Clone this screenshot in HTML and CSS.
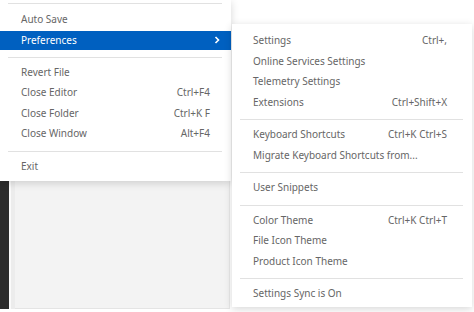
FILE: index.html
```html
<!DOCTYPE html>
<html lang="en">
<head>
    <meta charset="UTF-8">
    <title>File Menu</title>
    <link rel="stylesheet" href="styles.css">
</head>
<body>

<div class="workbench">
    <div class="activity-bar"></div>
    <div class="sidebar-edge"></div>
    <div class="sidebar"></div>
</div>

<!-- File menu -->
<div class="menu menu-file">
    <div class="separator first"></div>
    <div class="item"><span class="label">Auto Save</span></div>
    <div class="item active">
        <span class="label">Preferences</span>
        <svg class="chevron" width="6" height="8" viewBox="0 0 6 8"><path d="M1.5 1 L4.5 4 L1.5 7" fill="none" stroke="#fff" stroke-width="1.6"/></svg>
    </div>
    <div class="separator"></div>
    <div class="item"><span class="label">Revert File</span></div>
    <div class="item"><span class="label">Close Editor</span><span class="keys">Ctrl+F4</span></div>
    <div class="item"><span class="label">Close Folder</span><span class="keys">Ctrl+K F</span></div>
    <div class="item"><span class="label">Close Window</span><span class="keys">Alt+F4</span></div>
    <div class="separator"></div>
    <div class="item"><span class="label">Exit</span></div>
</div>

<!-- Preferences submenu -->
<div class="menu menu-prefs">
    <div class="item"><span class="label">Settings</span><span class="keys">Ctrl+,</span></div>
    <div class="item"><span class="label">Online Services Settings</span></div>
    <div class="item"><span class="label">Telemetry Settings</span></div>
    <div class="item"><span class="label">Extensions</span><span class="keys">Ctrl+Shift+X</span></div>
    <div class="separator"></div>
    <div class="item"><span class="label">Keyboard Shortcuts</span><span class="keys">Ctrl+K Ctrl+S</span></div>
    <div class="item"><span class="label">Migrate Keyboard Shortcuts from...</span></div>
    <div class="separator"></div>
    <div class="item"><span class="label">User Snippets</span></div>
    <div class="separator"></div>
    <div class="item"><span class="label">Color Theme</span><span class="keys">Ctrl+K Ctrl+T</span></div>
    <div class="item"><span class="label">File Icon Theme</span></div>
    <div class="item"><span class="label">Product Icon Theme</span></div>
    <div class="separator"></div>
    <div class="item"><span class="label">Settings Sync is On</span></div>
</div>

</body>
</html>
```

FILE: styles.css
```css
:root {
    --menu-fg: #666;
    --menu-sep: #e1e1e1;
    --select-bg: #0060c0;
    --activity: #2c2c2c;
    --sidebar: #f3f3f3;
}

* {
    box-sizing: border-box;
    margin: 0;
    padding: 0;
}

body {
    width: 474px;
    height: 312px;
    background: #fff;
    font-family: "Noto Sans", "Open Sans", sans-serif;
    font-size: 10px;
    color: var(--menu-fg);
    position: relative;
    overflow: hidden;
}

/* Background workbench */
.workbench {
    display: flex;
    height: 309px;
}

.activity-bar {
    width: 9px;
    background: var(--activity);
}

.sidebar-edge {
    width: 6px;
    background: #ececec;
    border-left: 2px solid #fafafa;
}

.sidebar {
    width: 215px;
    background: var(--sidebar);
    border-right: 1px solid #e8e8e8;
    border-bottom: 1px solid #e4e4e4;
}

/* Menus */
.menu {
    position: absolute;
    background: #fff;
    box-shadow: 0 2px 8px rgba(0, 0, 0, 0.16);
}

.menu-file {
    left: 0;
    top: 0;
    width: 231px;
    padding-bottom: 5px;
}

.menu-prefs {
    left: 232px;
    top: 24px;
    width: 240px;
    padding: 6px 0 3px;
}

.item {
    height: 20.5px;
    display: flex;
    align-items: center;
    padding: 0 21px 0 21px;
    white-space: nowrap;
}

.menu-prefs .item {
    padding: 0 25px 0 21px;
}

.item .label {
    flex: 1;
}

.item.active {
    background: var(--select-bg);
    color: #fff;
    height: 19px;
    margin: 1px 0 0.5px;
    padding-right: 11px;
}

.chevron {
    display: block;
}

.separator {
    height: 1px;
    background: var(--menu-sep);
    margin: 7px 9px 4px 8px;
}

.separator.first {
    margin: 3px 9px 5px 8px;
}
```
